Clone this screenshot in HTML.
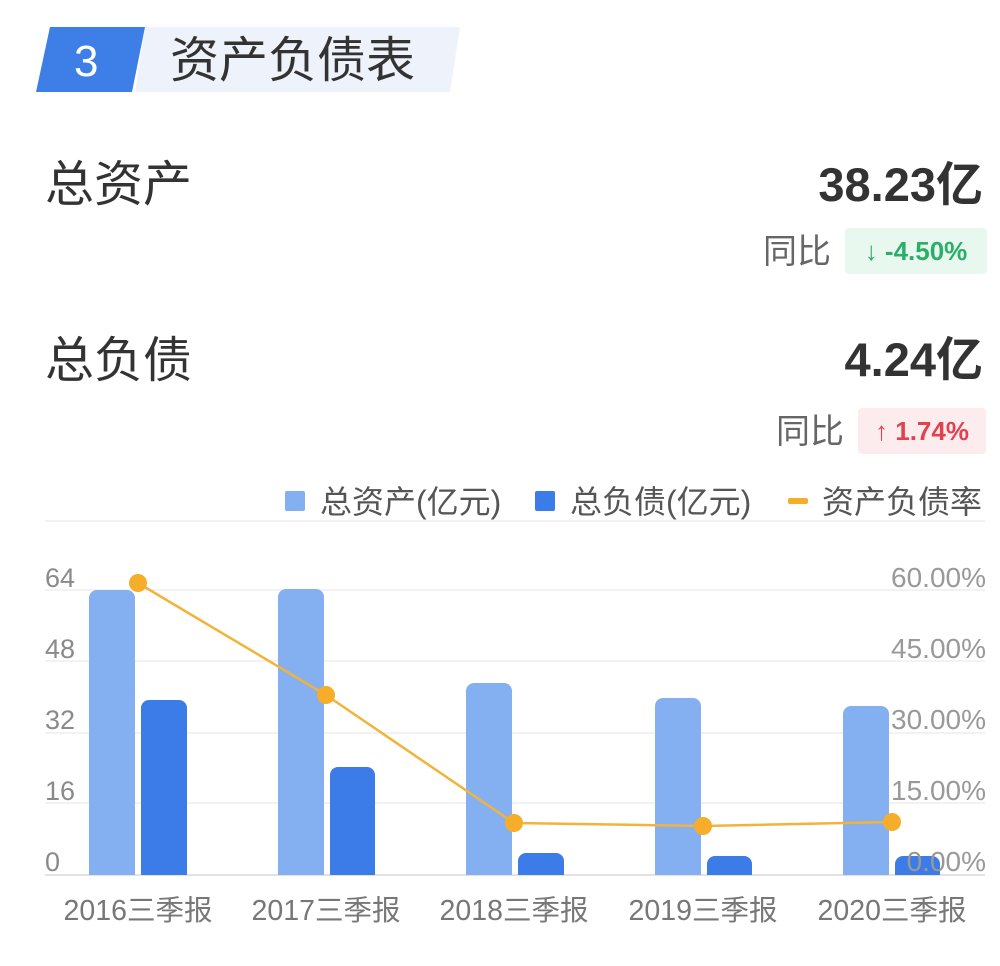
<!DOCTYPE html>
<html><head><meta charset="utf-8"><style>
body{margin:0;width:1000px;height:966px;background:#fff;overflow:hidden;font-family:"Liberation Sans","Noto Sans CJK SC",sans-serif;position:relative}
.a{position:absolute;white-space:nowrap}
</style></head><body>
<svg class="a" style="left:0;top:0" width="1000" height="966">
<polygon points="145,27 460,27 450,92 135,92" fill="#eef2fa"/>
<polygon points="50,27 145,27 132,92 36,92" fill="#3d7fe6"/>
<g stroke="#eeeeee" stroke-width="1.5">
<line x1="45" y1="521" x2="985" y2="521"/>
<line x1="45" y1="590" x2="985" y2="590"/>
<line x1="45" y1="661" x2="985" y2="661"/>
<line x1="45" y1="733" x2="985" y2="733"/>
<line x1="45" y1="803" x2="985" y2="803"/>
</g>
<line x1="45" y1="875" x2="985" y2="875" stroke="#e2e2e2" stroke-width="2"/>
<g fill="#84aff0">
<path d="M89 875V598a8 8 0 0 1 8-8h30a8 8 0 0 1 8 8V875z"/>
<path d="M278 875V597a8 8 0 0 1 8-8h30a8 8 0 0 1 8 8V875z"/>
<path d="M466 875V691a8 8 0 0 1 8-8h30a8 8 0 0 1 8 8V875z"/>
<path d="M655 875V706a8 8 0 0 1 8-8h30a8 8 0 0 1 8 8V875z"/>
<path d="M843 875V714a8 8 0 0 1 8-8h30a8 8 0 0 1 8 8V875z"/>
</g>
<g fill="#3b7ce8">
<path d="M141 875V708a8 8 0 0 1 8-8h30a8 8 0 0 1 8 8V875z"/>
<path d="M330 875V775a8 8 0 0 1 8-8h29a8 8 0 0 1 8 8V875z"/>
<path d="M518 875V861a8 8 0 0 1 8-8h30a8 8 0 0 1 8 8V875z"/>
<path d="M707 875V864a8 8 0 0 1 8-8h29a8 8 0 0 1 8 8V875z"/>
<path d="M895 875V864a8 8 0 0 1 8-8h29a8 8 0 0 1 8 8V875z"/>
</g>
<polyline points="138,583 326,695 514,823 703,826 892,822" fill="none" stroke="#f2b33a" stroke-width="2.5"/>
<g fill="#f5ad2a">
<circle cx="138" cy="583" r="9"/><circle cx="326" cy="695" r="9"/><circle cx="514" cy="823" r="9"/><circle cx="703" cy="826" r="9"/><circle cx="892" cy="822" r="9"/>
</g>
<rect x="285" y="491" width="20" height="20" rx="2" fill="#84aff0"/>
<rect x="535" y="491" width="20" height="20" rx="2" fill="#3b7ce8"/>
<rect x="788" y="498" width="20" height="6" rx="2" fill="#f5ad2a"/>
<g font-family="Liberation Sans, Noto Sans CJK SC, sans-serif" font-size="27" fill="#8a8a8a">
<text x="45" y="587">64</text><text x="45" y="658">48</text><text x="45" y="729">32</text><text x="45" y="800">16</text><text x="45" y="871">0</text>
<g text-anchor="end" font-size="28" fill="#999"><text x="986" y="587">60.00%</text><text x="986" y="658">45.00%</text><text x="986" y="729">30.00%</text><text x="986" y="800">15.00%</text><text x="986" y="871">0.00%</text></g>
<g text-anchor="middle" fill="#777" font-size="28.5"><text x="138" y="920">2016三季报</text><text x="326" y="920">2017三季报</text><text x="514" y="920">2018三季报</text><text x="703" y="920">2019三季报</text><text x="892" y="920">2020三季报</text></g>
</g>
<g font-family="Liberation Sans, Noto Sans CJK SC, sans-serif" font-size="32" fill="#555">
<text x="320" y="513">总资产(亿元)</text><text x="570" y="513">总负债(亿元)</text><text x="822" y="513">资产负债率</text>
</g>
</svg>
<div class="a" style="left:74px;top:34px;color:#fff;font-size:44px;line-height:56px">3</div>
<div class="a" style="left:170px;top:30px;color:#333;font-size:49px;line-height:62px">资产负债表</div>
<div class="a" style="left:45px;top:154px;color:#333;font-size:49px;line-height:62px">总资产</div>
<div class="a" style="right:17px;top:155px;color:#333;font-size:47px;font-weight:bold;line-height:60px">38.23亿</div>
<div class="a" style="left:763px;top:229px;color:#666;font-size:34px;line-height:46px">同比</div>
<div class="a" style="left:845px;top:228px;width:142px;height:46px;background:#e9f8ef;border-radius:4px;color:#2cae6a;font-size:26px;line-height:46px;text-align:center;font-weight:bold">↓ -4.50%</div>
<div class="a" style="left:45px;top:330px;color:#333;font-size:49px;line-height:62px">总负债</div>
<div class="a" style="right:17px;top:330px;color:#333;font-size:47px;font-weight:bold;line-height:60px">4.24亿</div>
<div class="a" style="left:776px;top:409px;color:#666;font-size:34px;line-height:46px">同比</div>
<div class="a" style="left:858px;top:408px;width:128px;height:46px;background:#fdecee;border-radius:4px;color:#e0424f;font-size:26px;line-height:46px;text-align:center;font-weight:bold">↑ 1.74%</div>
</body></html>
